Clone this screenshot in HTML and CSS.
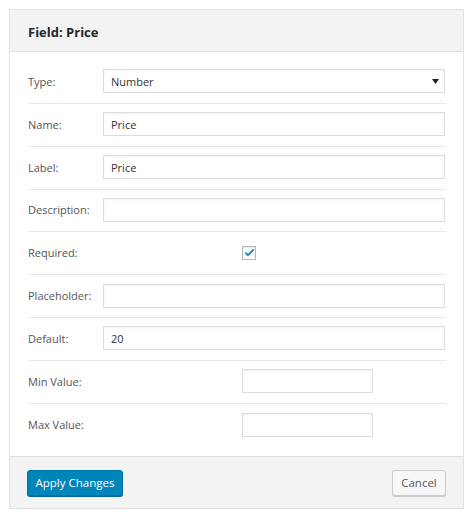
FILE: index.html
```html
<!DOCTYPE html>
<html lang="en">
<head>
<meta charset="utf-8">
<title>Field: Price</title>
<link rel="stylesheet" href="styles.css">
</head>
<body>
<div class="panel">
  <div class="panel-header">
    <h2 class="panel-title">Field: Price</h2>
  </div>
  <div class="panel-body">
    <div class="row">
      <span class="label">Type:</span>
      <div class="control select">
        <span class="value">Number</span>
        <svg class="caret" width="7" height="5" viewBox="0 0 7 5"><path d="M0 0H7L3.5 5Z" fill="#222"/></svg>
      </div>
    </div>
    <div class="row">
      <span class="label">Name:</span>
      <div class="control"><span class="value">Price</span></div>
    </div>
    <div class="row">
      <span class="label">Label:</span>
      <div class="control"><span class="value">Price</span></div>
    </div>
    <div class="row">
      <span class="label">Description:</span>
      <div class="control"></div>
    </div>
    <div class="row row-wide">
      <span class="label">Required:</span>
      <span class="checkbox">
        <svg width="11" height="9" viewBox="0 0 11 9"><path d="M1.3 4.6L4 7.2L9.7 1.4" fill="none" stroke="#1e8cbe" stroke-width="2"/></svg>
      </span>
    </div>
    <div class="row">
      <span class="label">Placeholder:</span>
      <div class="control"></div>
    </div>
    <div class="row">
      <span class="label">Default:</span>
      <div class="control"><span class="value">20</span></div>
    </div>
    <div class="row row-wide">
      <span class="label">Min Value:</span>
      <div class="control small"></div>
    </div>
    <div class="row row-wide">
      <span class="label">Max Value:</span>
      <div class="control small"></div>
    </div>
  </div>
  <div class="panel-footer">
    <button class="btn btn-primary">Apply Changes</button>
    <button class="btn btn-secondary">Cancel</button>
  </div>
</div>
</body>
</html>
```
FILE: styles.css
```css
* { box-sizing: border-box; }
html, body { margin: 0; padding: 0; background: #ffffff; }
body {
  padding: 9px 10px 0 9px;
  font-family: "Open Sans", "Noto Sans", "Liberation Sans", sans-serif;
  color: #444;
}
.panel {
  width: 455px;
  border: 1px solid #e3e3e3;
  box-shadow: 0 1px 1px rgba(0,0,0,0.04);
  background: #fff;
}
.panel-header {
  height: 42px;
  background: #f3f3f3;
  border-bottom: 1px solid #e1e1e1;
  display: flex;
  align-items: center;
  padding: 0 18px;
}
.panel-title {
  margin: 0;
  font-size: 13px;
  font-weight: 700;
  color: #23282d;
  position: relative;
  top: 1px;
}
.panel-body {
  padding: 9px 17px 10px 18px;
}
.row {
  display: flex;
  align-items: center;
  height: 42.85px;
  padding: 0 0 1px;
  border-bottom: 1px solid #e8e8e8;
}
.row:last-child { border-bottom: none; height: 42px; padding: 0; }
.label {
  width: 75px;
  flex: none;
  font-size: 11px;
  color: #555;
}
.row-wide .label { width: 214px; }
.control {
  flex: 1;
  height: 24px;
  margin-right: 1px;
  border: 1px solid #dcdcdc;
  box-shadow: inset 0 1px 2px rgba(0,0,0,0.05);
  display: flex;
  align-items: center;
  padding: 0 7px;
  font-size: 11px;
  color: #333;
  background: #fff;
}
.control.small {
  flex: none;
  width: 131px;
}
.select { justify-content: space-between; padding-right: 5px; }
.caret { display: block; }
.checkbox {
  width: 14px;
  height: 14px;
  border: 1px solid #b4b9be;
  box-shadow: inset 0 1px 2px rgba(0,0,0,0.1);
  display: flex;
  align-items: center;
  justify-content: center;
}
.panel-footer {
  background: #f3f3f3;
  border-top: 1px solid #e1e1e1;
  padding: 13px 17px 12px 17px;
  display: flex;
  justify-content: space-between;
  align-items: center;
}
.btn {
  font-family: inherit;
  font-size: 11.5px;
  height: 26px;
  border-radius: 3px;
  padding: 0;
  cursor: pointer;
  line-height: 24px;
  white-space: nowrap;
  text-align: center;
}
.btn-primary {
  background: #0085ba;
  border: 1px solid #0073aa;
  color: #fff;
  box-shadow: 0 1px 0 #006799;
  width: 96px;
}
.btn-secondary {
  background: #f7f7f7;
  border: 1px solid #cccccc;
  color: #555;
  box-shadow: 0 1px 0 #cccccc;
  width: 54px;
}
```
